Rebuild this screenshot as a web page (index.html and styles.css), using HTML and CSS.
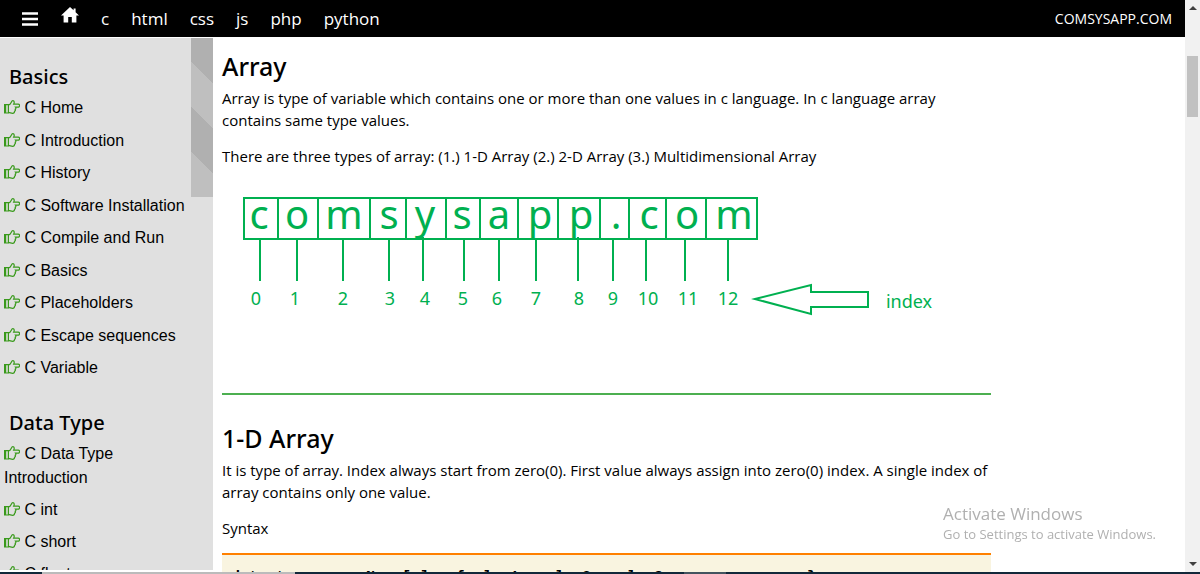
FILE: index.html
```
<!DOCTYPE html>
<html lang="en">
<head>
    <meta charset="UTF-8">
    <meta name="viewport" content="width=device-width, initial-scale=1.0">
    <title>Array in C</title>
    <link rel="stylesheet" href="styles.css">
</head>
<body>

    <!-- shared icon -->
    <svg class="sprite" aria-hidden="true">
        <symbol id="hand" viewBox="0 0 16 14">
            <path d="M.6 4.6h3.8V13H.6z" fill="none" stroke="#3a9a1c" stroke-width="1.2"/>
            <path d="M.6 4.6h1.6V13H.6z" fill="#3a9a1c"/>
            <path d="M4.4 4.9C6.2 4.7 6.8 3.4 7.3 2.2C7.7 1.2 8.1.7 8.9.7c1.5 0 1.7 1.7.7 3.5h4.5a1.5 1.5 0 0 1 0 3H11.5c.7.9.4 1.7-.3 2.1c.4 1 0 1.7-.7 2c.1 1.3-.6 2-1.9 2C6.8 13.3 6.2 12.5 4.4 12.4" fill="none" stroke="#3a9a1c" stroke-width="1.2"/>
        </symbol>
    </svg>

    <!-- Top bar -->
    <header class="topbar">
        <button class="menu-btn" type="button" aria-label="Menu">
            <svg width="18" height="14" viewBox="0 0 18 14"><path d="M1 1.5h16M1 7h16M1 12.5h16" stroke="#fff" stroke-width="2.4"/></svg>
        </button>
        <nav class="nav">
            <a class="home" href="#" aria-label="Home">
                <svg width="18" height="16" viewBox="0 0 18 16"><path d="M9 0L0 8.5h2.6V15.5H7.2V10h3.6v5.5h4.6V8.5H18L14.6 5.2V1.5h-2v1.8z" fill="#fff"/></svg>
            </a>
            <a href="#">c</a>
            <a href="#">html</a>
            <a href="#">css</a>
            <a href="#">js</a>
            <a href="#">php</a>
            <a href="#">python</a>
        </nav>
        <a class="brand" href="#">COMSYSAPP.COM</a>
    </header>

    <div class="page">
        <!-- Left menu -->
        <aside class="sidebar">
            <div class="side-scroll"></div>
            <h3>Basics</h3>
            <ul class="basics">
                <li><a href="#"><svg class="hand"><use href="#hand"/></svg> C Home</a></li>
                <li><a href="#"><svg class="hand"><use href="#hand"/></svg> C Introduction</a></li>
                <li><a href="#"><svg class="hand"><use href="#hand"/></svg> C History</a></li>
                <li><a href="#"><svg class="hand"><use href="#hand"/></svg> C Software Installation</a></li>
                <li><a href="#"><svg class="hand"><use href="#hand"/></svg> C Compile and Run</a></li>
                <li><a href="#"><svg class="hand"><use href="#hand"/></svg> C Basics</a></li>
                <li><a href="#"><svg class="hand"><use href="#hand"/></svg> C Placeholders</a></li>
                <li><a href="#"><svg class="hand"><use href="#hand"/></svg> C Escape sequences</a></li>
                <li><a href="#"><svg class="hand"><use href="#hand"/></svg> C Variable</a></li>
            </ul>
            <h3>Data Type</h3>
            <ul>
                <li><a href="#"><svg class="hand"><use href="#hand"/></svg> C Data Type<br>Introduction</a></li>
                <li><a href="#"><svg class="hand"><use href="#hand"/></svg> C int</a></li>
                <li><a href="#"><svg class="hand"><use href="#hand"/></svg> C short</a></li>
                <li><a href="#"><svg class="hand"><use href="#hand"/></svg> C float</a></li>
            </ul>
        </aside>

        <!-- Main content -->
        <main class="content">
            <section class="intro">
                <h2>Array</h2>
                <p>Array is type of variable which contains one or more than one values in c language. In c language array<br>contains same type values.</p>
                <p>There are three types of array: (1.) 1-D Array (2.) 2-D Array (3.) Multidimensional Array</p>
                <svg class="diagram" width="720" height="130" viewBox="0 0 720 130" role="img" aria-label="Array index">
                    <g class="lines">
                        <path d="M22 8H535V49H22z"/>
                        <path d="M56 8V50M96 8V50M148 8V50M184 8V50M224 8V50M258 8V50M296 8V50M336 8V50M378 8V50M407 8V50M444 8V50M484 8V50"/>
                        <path d="M38 50V91M75 50V91M121 50V91M167 50V91M201 47V91M242 50V91M277 50V91M314 50V91M356 47V91M391 50V91M424 50V91M463 50V91M506 50V91"/>
                        <path d="M533 109L589 95V102H646V117H589V124z"/>
                    </g>
                    <g class="letters">
                        <text x="37" y="39">c</text>
                        <text x="75" y="39">o</text>
                        <text x="122" y="39">m</text>
                        <text x="167" y="39">s</text>
                        <text x="203" y="39">y</text>
                        <text x="240" y="39">s</text>
                        <text x="277" y="39">a</text>
                        <text x="318" y="39">p</text>
                        <text x="359" y="39">p</text>
                        <text x="394" y="39">.</text>
                        <text x="427" y="39">c</text>
                        <text x="465" y="39">o</text>
                        <text x="512" y="39">m</text>
                    </g>
                    <g class="numbers">
                        <text x="34" y="115">0</text>
                        <text x="73" y="115">1</text>
                        <text x="121" y="115">2</text>
                        <text x="168" y="115">3</text>
                        <text x="203" y="115">4</text>
                        <text x="241" y="115">5</text>
                        <text x="275" y="115">6</text>
                        <text x="314" y="115">7</text>
                        <text x="357" y="115">8</text>
                        <text x="391" y="115">9</text>
                        <text x="426" y="115">10</text>
                        <text x="466" y="115">11</text>
                        <text x="506" y="115">12</text>
                        <text x="687" y="118">index</text>
                    </g>
                </svg>
            </section>

            <section>
                <h2>1-D Array</h2>
                <p>It is type of array. Index always start from zero(0). First value always assign into zero(0) index. A single index of<br>array contains only one value.</p>
                <p>Syntax</p>
                <pre class="code">data_type arrayName[n] = {value1, value2, value3, ............. };</pre>
            </section>
        </main>

        <div class="scrollbar">
            <span class="arrow up"></span>
            <span class="thumb"></span>
            <span class="arrow down"></span>
        </div>
    </div>

    <div class="watermark">
        <strong>Activate Windows</strong>
        <span>Go to Settings to activate Windows.</span>
    </div>
    <div class="taskbar"></div>

</body>
</html>
```
FILE: styles.css
```
* {
    box-sizing: border-box;
}

body {
    margin: 0;
    height: 100vh;
    display: flex;
    flex-direction: column;
    overflow: hidden;
    background-color: #fff;
    color: #000;
    font-family: "Open Sans", sans-serif;
    font-size: 15px;
    line-height: 22px;
}

a {
    color: inherit;
    text-decoration: none;
}

.sprite {
    position: absolute;
    width: 0;
    height: 0;
}

/* top bar */
.topbar {
    display: flex;
    align-items: center;
    flex-shrink: 0;
    height: 37px;
    margin-right: 15px;
    padding: 0 13px 0 21px;
    background-color: #000;
    color: #fff;
}

.menu-btn {
    display: flex;
    padding: 0;
    border: none;
    background: none;
}

.nav {
    display: flex;
    align-items: center;
    gap: 22px;
    margin-left: 22px;
    font-size: 17px;
}

.nav .home {
    display: flex;
    padding-bottom: 7px;
}

.brand {
    margin-left: auto;
    font-size: 14px;
}

/* page columns */
.page {
    display: flex;
    flex: 1;
    min-height: 0;
}

.sidebar {
    position: relative;
    width: 213px;
    flex-shrink: 0;
    margin: 1px 0 2px;
    padding: 26px 0 0 4px;
    overflow: hidden;
    background-color: #e0e0e0;
    font-family: "Liberation Sans", Arial, sans-serif;
    font-size: 16px;
    line-height: 24px;
}

.side-scroll {
    position: absolute;
    top: 0;
    right: 0;
    width: 22px;
    height: 159px;
    background: repeating-linear-gradient(45deg, #bfbfbf 0 32px, #b0b0b0 32px 64px);
}

.sidebar h3 {
    margin: 0 0 6px 5px;
    font-size: 20px;
    line-height: 26px;
}

h2,
.sidebar h3 {
    font-family: "Noto Sans", sans-serif;
    font-weight: 500;
}

.sidebar ul {
    display: flex;
    flex-direction: column;
    justify-content: space-between;
    gap: 8px;
    margin: 0;
    padding: 0;
    list-style: none;
}

.sidebar .basics {
    height: 284px;
    margin-bottom: 30px;
}

.hand {
    width: 16px;
    height: 14px;
    vertical-align: -1px;
}

.content {
    flex: 1;
    min-width: 0;
    padding: 12px 9px 0;
    overflow: hidden;
}

.content section {
    max-width: 769px;
}

.content h2 {
    margin: 0 0 4px;
    font-size: 25px;
    line-height: 34px;
}

.content p {
    margin: 0 0 14px;
    white-space: nowrap;
}

.intro {
    height: 346px;
    margin-bottom: 26px;
    border-bottom: 2px solid #4caf50;
}

/* array picture */
.diagram {
    display: block;
    margin-top: 23px;
    font-family: "Noto Sans", sans-serif;
}

.lines {
    fill: none;
    stroke: #00b050;
    stroke-width: 2;
}

.letters,
.numbers {
    fill: #00b050;
    font-size: 18px;
    text-anchor: middle;
}

.letters {
    font-size: 40px;
}

.code {
    margin: 0;
    padding: 12px 9px;
    border-top: 2px solid #ff8000;
    background-color: #f9f4e0;
    font-family: "Liberation Mono", monospace;
    font-size: 15px;
    font-weight: bold;
}

/* window scrollbar */
.scrollbar {
    display: flex;
    flex-direction: column;
    align-items: center;
    width: 15px;
    margin-top: -37px;
    padding: 6px 0;
    background-color: #f1f1f1;
}

.arrow {
    border: 4px solid transparent;
}

.up {
    border-top: none;
    border-bottom-color: #404040;
}

.down {
    margin-top: auto;
    border-bottom: none;
    border-top-color: #404040;
}

.thumb {
    width: 11px;
    height: 61px;
    margin-top: 46px;
    background-color: #c1c1c1;
}

.watermark {
    position: fixed;
    right: 44px;
    bottom: 31px;
    display: flex;
    flex-direction: column;
    color: #b0b0b0;
    font-size: 13px;
    line-height: 18px;
}

.watermark strong {
    font-size: 17px;
    font-weight: normal;
    line-height: 22px;
}

.taskbar {
    flex-shrink: 0;
    height: 2px;
    background: linear-gradient(to right, #12283a 42px, #bbb 42px, #bbb 295px, #12283a 295px, #12283a 684px, #44545f 684px, #44545f 726px, #12283a 726px);
}
```
